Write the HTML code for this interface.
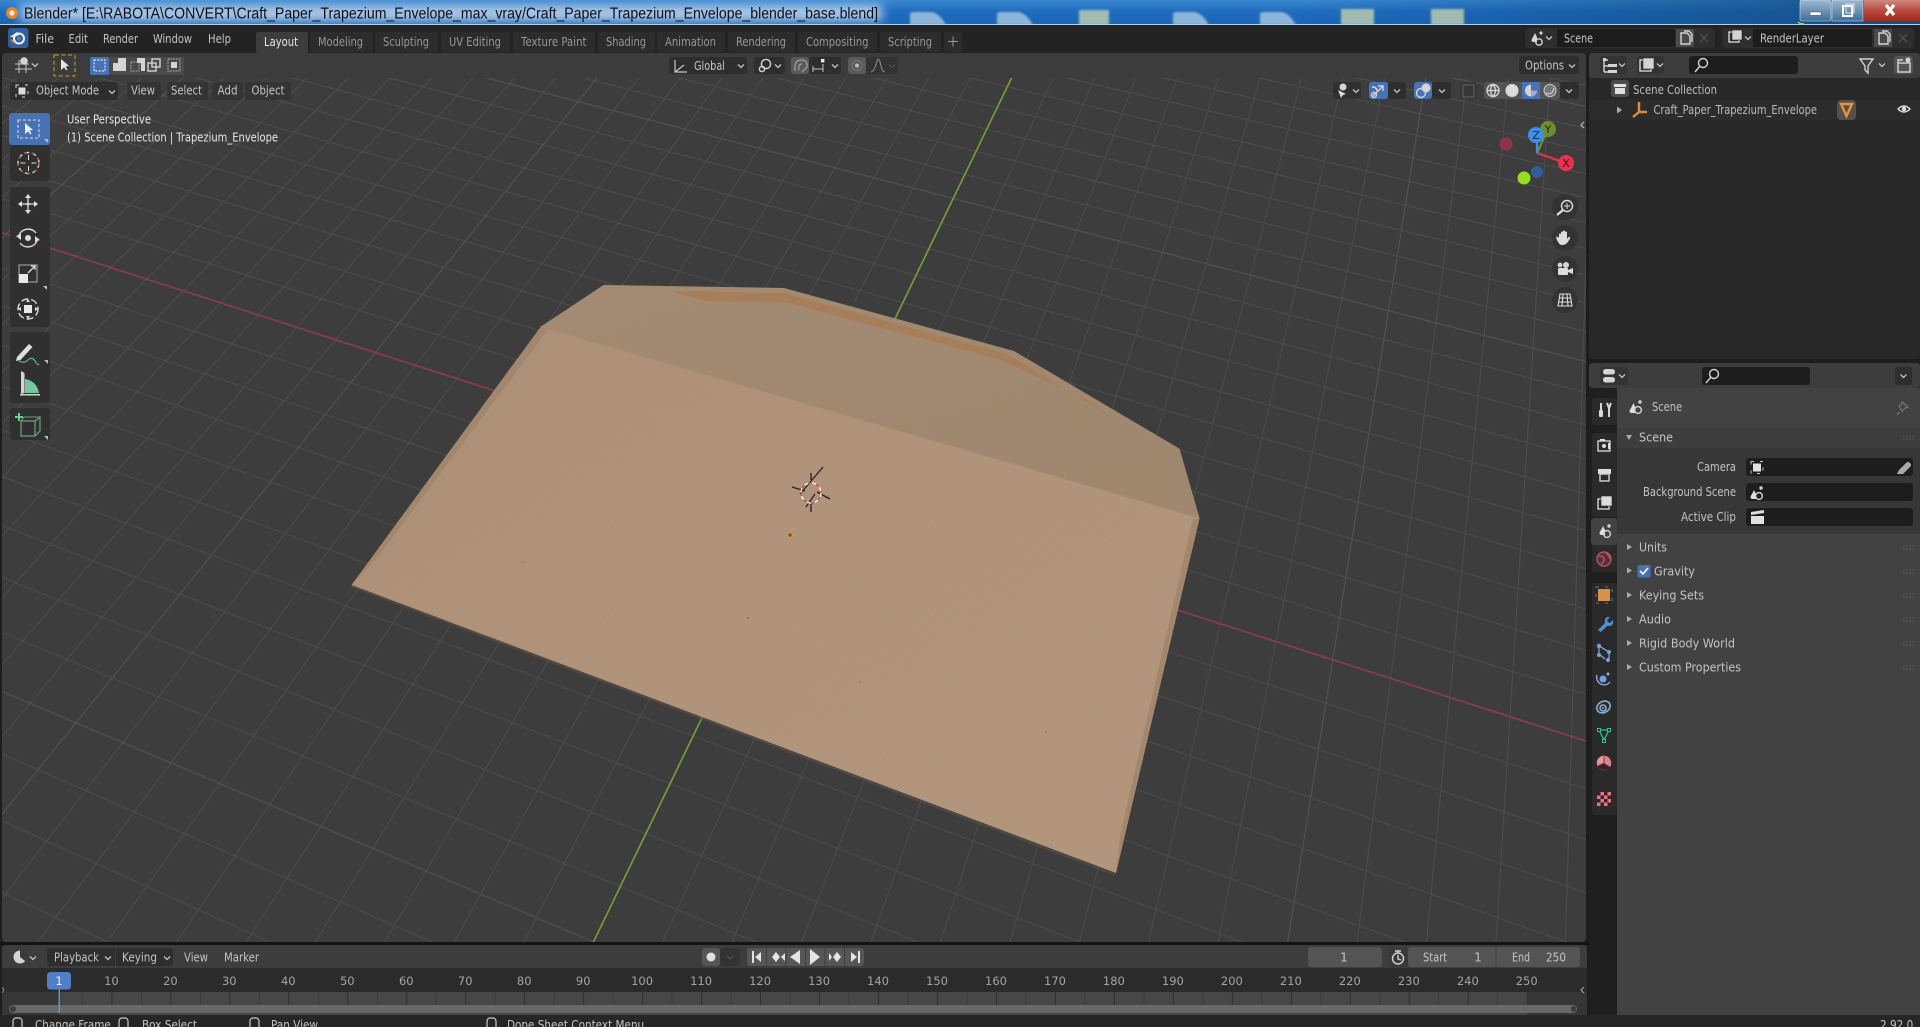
<!DOCTYPE html>
<html lang="en"><head><meta charset="utf-8"><title>Blender</title>
<style>
html,body{margin:0;padding:0;background:#1d1d1d;overflow:hidden;width:1920px;height:1027px}
svg{display:block;position:absolute;left:0;top:0}
text{font-family:"DejaVu Sans","Liberation Sans",sans-serif;font-size:12px;fill:#c4c4c4}
.d{fill:#969696}.b{fill:#e6e6e6}.n{fill:#a4a4a4;font-size:11.5px}.h{fill:#bdbdbd;font-size:12px}
.i{fill:none;stroke:#d4d4d4;stroke-width:1.4}.f{fill:#d4d4d4}
.c{fill:none;stroke:#c4c4c4;stroke-width:1.3}
.st{position:absolute;top:1015px;height:12px;line-height:21px;overflow:hidden;white-space:nowrap;font:12px/21px "DejaVu Sans","Liberation Sans",sans-serif;color:#c4c4c4;transform:scaleX(.87);transform-origin:0 0}
</style></head><body>
<svg xmlns="http://www.w3.org/2000/svg" width="1920" height="1027" viewBox="0 0 1920 1027">
<defs>
<path id="c" class="c" d="M-3-1.5L0 1.5L3-1.5"/>
<linearGradient id="tb" x1="0" y1="0" x2="0" y2="1"><stop offset="0" stop-color="#3a88d0"/><stop offset=".45" stop-color="#1f6cbe"/><stop offset="1" stop-color="#1a66b6"/></linearGradient>
<linearGradient id="tr" x1="0" y1="0" x2="1" y2="0"><stop offset="0" stop-color="#0d4f90" stop-opacity="0"/><stop offset="1" stop-color="#144a7c" stop-opacity=".85"/></linearGradient>
<linearGradient id="wb" x1="0" y1="0" x2="0" y2="1"><stop offset="0" stop-color="#9db9d2"/><stop offset=".5" stop-color="#6f93b4"/><stop offset="1" stop-color="#3d6e99"/></linearGradient>
<linearGradient id="wc" x1="0" y1="0" x2="0" y2="1"><stop offset="0" stop-color="#d08a80"/><stop offset=".5" stop-color="#b84a3e"/><stop offset="1" stop-color="#9c2c20"/></linearGradient>
<linearGradient id="bd" x1="0" y1="0" x2="1" y2="1"><stop offset="0" stop-color="#ae9078"/><stop offset=".6" stop-color="#b3967c"/><stop offset="1" stop-color="#b5987e"/></linearGradient>
<linearGradient id="fl" x1="0" y1="0" x2="1" y2="1"><stop offset="0" stop-color="#a48b74"/><stop offset="1" stop-color="#a0886f"/></linearGradient>
<pattern id="tk" width="58.97" height="30" patternUnits="userSpaceOnUse" patternTransform="translate(111.4 992)"><rect x="0" width="1" height="30" fill="#2f2f2f"/><rect x="29.48" width="1" height="30" fill="#3b3b3b"/></pattern>
<filter id="bl" x="-5%" y="-50%" width="110%" height="200%"><feGaussianBlur stdDeviation="5"/></filter>
<filter id="b2" x="-10%" y="-10%" width="120%" height="120%"><feGaussianBlur stdDeviation="1"/></filter>
<filter id="s1"><feGaussianBlur stdDeviation=".35"/></filter>
<filter id="nz" x="0" y="0" width="100%" height="100%"><feTurbulence type="fractalNoise" baseFrequency=".8" numOctaves="2" seed="4"/><feColorMatrix values="0 0 0 0 .3 0 0 0 0 .22 0 0 0 0 .15 0 0 0 .5 -.17"/><feComposite in2="SourceGraphic" operator="in"/></filter>
</defs>

<!-- title bar -->
<rect width="1920" height="25" fill="url(#tb)"/>
<rect x="1300" width="620" height="25" fill="url(#tr)"/>
<g fill="#bcd6e6" opacity=".7" filter="url(#b2)">
<path d="M910 25V14q0-2 4-2h18q8 2 14 13z"/><path d="M997 25V14q0-2 4-2h18q8 2 14 13z"/>
<path d="M1173 25V14q0-2 4-2h18q8 2 14 13z"/><path d="M1260 25V14q0-2 4-2h18q8 2 14 13z"/>
</g>
<g fill="#cfd8b0" opacity=".75" filter="url(#b2)"><rect x="1079" y="10" width="30" height="15"/><rect x="1341" y="9" width="33" height="16"/><rect x="1431" y="9" width="33" height="16"/></g>
<rect x="20" y="5" width="862" height="16" fill="#e8f1fa" opacity=".72" filter="url(#bl)"/>
<rect y="24" width="1920" height="1" fill="#b3d0ea"/>
<circle cx="12" cy="13" r="6" fill="#e8842a"/><circle cx="12" cy="13" r="2.6" fill="#f3efe8"/>
<text x="24" y="18.5" textLength="854" lengthAdjust="spacingAndGlyphs" style="font-family:'Liberation Sans',sans-serif;font-size:15.5px;fill:#0e0e14">Blender* [E:\RABOTA\CONVERT\Craft_Paper_Trapezium_Envelope_max_vray/Craft_Paper_Trapezium_Envelope_blender_base.blend]</text>
<rect x="1800" y="0" width="31" height="21" rx="2" fill="url(#wb)" stroke="#cfe0ee" stroke-width=".6"/>
<rect x="1832" y="0" width="31" height="21" fill="url(#wb)" stroke="#cfe0ee" stroke-width=".6"/>
<rect x="1864" y="0" width="56" height="21" fill="url(#wc)"/>
<rect x="1810" y="12" width="11" height="3.4" fill="#fff" stroke="#334" stroke-width=".4"/>
<rect x="1843" y="6" width="9" height="10" fill="none" stroke="#fff" stroke-width="2"/><rect x="1846" y="4" width="8" height="9" fill="none" stroke="#dfe8f0" stroke-width="1"/>
<path d="M1886 5l8 10M1894 5l-8 10" stroke="#fff" stroke-width="3.2" fill="none"/>
<path d="M1798 22q2 2 6 2" stroke="#7fe08a" stroke-width="1.4" fill="none"/>

<!-- top bar -->
<rect y="25" width="1920" height="28" fill="#232323"/>
<rect x="8" y="28" width="20.5" height="20" rx="3" fill="#2f5f9f"/>
<circle cx="19" cy="38.5" r="5" fill="none" stroke="#f1f1f1" stroke-width="2"/><circle cx="19" cy="38.5" r="2" fill="#4a7fc0"/><path d="M10 37l7-5 2 3-5 2z" fill="#f1f1f1"/><path d="M15 43l-4-3" stroke="#e8842a" stroke-width="1.6"/>
<g>
<text x="35.5" y="43" textLength="18.5" lengthAdjust="spacingAndGlyphs">File</text>
<text x="68.5" y="43" textLength="19.5" lengthAdjust="spacingAndGlyphs">Edit</text>
<text x="103" y="43" textLength="35" lengthAdjust="spacingAndGlyphs">Render</text>
<text x="153" y="43" textLength="39" lengthAdjust="spacingAndGlyphs">Window</text>
<text x="208" y="43" textLength="23" lengthAdjust="spacingAndGlyphs">Help</text>
</g>
<g fill="#2c2c2c">
<rect x="310" y="32" width="63" height="20" rx="2"/><rect x="375" y="32" width="63" height="20" rx="2"/><rect x="441" y="32" width="69" height="20" rx="2"/><rect x="513" y="32" width="82" height="20" rx="2"/><rect x="598" y="32" width="57" height="20" rx="2"/><rect x="657" y="32" width="68" height="20" rx="2"/><rect x="728" y="32" width="67" height="20" rx="2"/><rect x="798" y="32" width="79" height="20" rx="2"/><rect x="880" y="32" width="61" height="20" rx="2"/><rect x="944" y="32" width="18" height="20" rx="2"/>
</g>
<rect x="256" y="32" width="52" height="21" rx="2" fill="#3d3d3d"/>
<g>
<text class="b" x="264" y="46" textLength="34" lengthAdjust="spacingAndGlyphs">Layout</text>
<text class="d" x="318" y="46" textLength="45" lengthAdjust="spacingAndGlyphs">Modeling</text>
<text class="d" x="383" y="46" textLength="46" lengthAdjust="spacingAndGlyphs">Sculpting</text>
<text class="d" x="449" y="46" textLength="52" lengthAdjust="spacingAndGlyphs">UV Editing</text>
<text class="d" x="521" y="46" textLength="65.5" lengthAdjust="spacingAndGlyphs">Texture Paint</text>
<text class="d" x="606" y="46" textLength="40" lengthAdjust="spacingAndGlyphs">Shading</text>
<text class="d" x="665" y="46" textLength="51" lengthAdjust="spacingAndGlyphs">Animation</text>
<text class="d" x="736" y="46" textLength="50" lengthAdjust="spacingAndGlyphs">Rendering</text>
<text class="d" x="806" y="46" textLength="62.5" lengthAdjust="spacingAndGlyphs">Compositing</text>
<text class="d" x="888" y="46" textLength="44" lengthAdjust="spacingAndGlyphs">Scripting</text>
</g>
<path d="M953 36.500v10M948 41.500h10" stroke="#999" stroke-width="1"/>
<!-- scene / renderlayer -->
<rect x="1525" y="28" width="190" height="20" rx="3" fill="#2e2e2e"/>
<rect x="1557" y="29" width="118" height="18" fill="#1c1c1c"/>
<rect x="1676" y="29" width="18" height="18" fill="#4a4a4a"/>
<path d="M1533 42q-3-1 0-5l2-4 2 4v5z" fill="#d4d4d4"/><circle cx="1539" cy="42" r="3.2" class="i"/><circle cx="1541" cy="33" r="1.6" class="f"/>
<use href="#c" x="1549" y="38"/>
<text x="1564" y="42.500" textLength="29" lengthAdjust="spacingAndGlyphs">Scene</text>
<path d="M1681 33h6l3 3v8h-9zM1684 31h5l3 3v8" class="i" stroke-width="1.1"/>
<path d="M1700 34l8 8M1708 34l-8 8" stroke="#555" stroke-width="1.2"/>
<rect x="1722" y="28" width="192" height="20" rx="3" fill="#2e2e2e"/>
<rect x="1753" y="29" width="119" height="18" fill="#1c1c1c"/>
<rect x="1874" y="29" width="18" height="18" fill="#4a4a4a"/>
<rect x="1729" y="32" width="10" height="10" class="i" fill="none"/><rect x="1732" y="30" width="10" height="10" fill="#d4d4d4" stroke="#222" stroke-width=".6"/>
<use href="#c" x="1748" y="38"/>
<text x="1760" y="42.500" textLength="64" lengthAdjust="spacingAndGlyphs">RenderLayer</text>
<path d="M1879 33h6l3 3v8h-9zM1882 31h5l3 3v8" class="i" stroke-width="1.1"/>
<path d="M1899 34l8 8M1907 34l-8 8" stroke="#555" stroke-width="1.2"/>

<!-- viewport -->
<rect x="2" y="53" width="1584" height="889" rx="4" fill="#3d3d3d"/>
<clipPath id="vp"><rect x="2" y="78" width="1584" height="864"/></clipPath>
<g clip-path="url(#vp)" filter="url(#s1)">
<path id="g1" fill="none" stroke="#4d4d4d" stroke-width="1"/>
<path id="g2" fill="none" stroke="#555" stroke-width="1"/>
<path d="M0 232L1600 745.600" stroke="#8f3b51" stroke-width="1.6"/>
<path d="M1012 77L592 945" stroke="#77a03a" stroke-width="1.6"/>
</g>
<rect x="2" y="53" width="1584" height="25" rx="4" fill="#3c3c3c"/>

<!-- envelope -->
<polyline points="351,586 1115,874.500" fill="none" stroke="#5a4e43" stroke-width="2.200" opacity=".7"/>
<polygon points="541,326.500 603.600,285 784,288 1014,351 1179.600,448.700 1199.500,518" fill="url(#fl)"/>
<polygon points="670,291 784,293 1007,354 1107,414 1092,402 998,359 788,303 705,301" fill="#a87e58"/>
<polygon points="541,326.500 1199.500,518 1116,873 351.600,585" fill="url(#bd)"/>
<polygon points="541,326.500 351.600,585 378,557 548.500,329" fill="#a4876d"/>
<polygon points="1199.500,518 1116,873 1120,835.500 1192.700,520" fill="#a5876c"/>
<polygon points="1192.700,520 1199.500,518 1191,555" fill="#a5876c"/>
<polygon points="541,326.500 603.600,285 784,288 1014,351 1179.600,448.700 1199.500,518 1116,873 351.600,585" fill="#000" filter="url(#nz)"/>
<path d="M541 326.500L1199.500 518" stroke="#a88a6f" stroke-width="1"/>
<g fill="#8a6f58"><circle cx="748" cy="618" r="1"/><circle cx="523" cy="562" r=".8"/><circle cx="860" cy="682" r=".8"/><circle cx="1046" cy="732" r=".8"/></g>
<g fill="none" stroke-width="1.300">
<path d="M800 494L823 467M811 480L811 473M806 507L815 494M792 487L805 491M817 492L830 499M811 504V512" stroke="#2a211b"/>
<circle cx="811" cy="493" r="10" stroke="#fff" stroke-dasharray="4 4"/>
<circle cx="811" cy="493" r="10" stroke="#d05050" stroke-dasharray="4 4" stroke-dashoffset="4"/>
</g>
<circle cx="790" cy="535" r="2.400" fill="#7a5a30" stroke="#f0a020" stroke-width="1"/>

<!-- viewport header row 1 -->
<g>
<path d="M15 69h17M15 64h14M19 60v13M26 60v13" stroke="#c4c4c4" stroke-width="1" fill="none"/><circle cx="24" cy="61" r="3.800" class="f"/>
<use href="#c" x="35" y="65"/>
<rect x="54" y="55" width="21" height="21" rx="1" fill="none" stroke="#b08c36" stroke-width="1.300" stroke-dasharray="4 2.500"/>
<path d="M61 59v11l3-2.500 2.500 3 1-1-2-3 3.500-.5z" fill="#e6e6e6"/>
<rect x="90" y="57" width="19" height="18" rx="2" fill="#4772b3"/>
<rect x="109" y="57" width="75" height="18" fill="#4a4a4a"/>
<rect x="94" y="60" width="11" height="11" fill="none" stroke="#d8e4f4" stroke-width="1.200" stroke-dasharray="2 1.300"/>
<path d="M113 63h5v-5h8v13h-13z" fill="#d4d4d4"/>
<path d="M137 58h8v13h-4v-8h-4z" fill="#d4d4d4"/><rect x="131" y="62" width="8" height="9" fill="none" stroke="#bbb" stroke-dasharray="1.500 1.200"/>
<rect x="148" y="63" width="8" height="8" fill="none" stroke="#d4d4d4" stroke-width="1.400"/><rect x="152" y="59" width="8" height="8" fill="none" stroke="#d4d4d4" stroke-width="1.400"/>
<rect x="168" y="59" width="12" height="12" fill="none" stroke="#bbb" stroke-dasharray="1.500 1.200"/><rect x="171" y="62" width="6" height="6" fill="#d4d4d4"/>
</g>
<g>
<rect x="669" y="57" width="78" height="17" rx="3" fill="#2e2e2e"/>
<path d="M675 60v12h12M675 72l9-7" stroke="#c8c8c8" stroke-width="1.200" fill="none"/>
<text x="694" y="70" textLength="31" lengthAdjust="spacingAndGlyphs">Global</text>
<use href="#c" x="741" y="66"/>
<rect x="754" y="57" width="31" height="17" rx="3" fill="#2e2e2e"/>
<circle cx="766" cy="64" r="4.600" class="i" stroke-width="1.100"/><circle cx="762" cy="69" r="2.600" class="i" stroke-width="1.100"/><use href="#c" x="778" y="66"/>
<rect x="791" y="57" width="18" height="17" rx="3" fill="#5a5a5a"/>
<path d="M795 71q-1-11 6-11t6 7l-5 5M799 70q-1-6 3-6" stroke="#a0a0a0" stroke-width="1.300" fill="none"/>
<rect x="809" y="57" width="32" height="17" rx="3" fill="#2e2e2e"/>
<path d="M813 66v6M823 64v8M813 69h10" stroke="#c0c0c0" stroke-width="1"/><rect x="821" y="59" width="3.400" height="3.400" fill="#eee"/><use href="#c" x="835" y="66"/>
<rect x="848" y="57" width="18" height="17" rx="3" fill="#5a5a5a"/><circle cx="857" cy="65.500" r="2" fill="#bbb"/><circle cx="857" cy="65.500" r="5" fill="none" stroke="#777"/>
<rect x="866" y="57" width="32" height="17" rx="3" fill="#333"/>
<path d="M871 72q3-1 4.500-6t2.500-7q2 1 3 7t4 6" stroke="#888" stroke-width="1.100" fill="none"/>
<path d="M889 64.500l3 3 3-3" stroke="#555" fill="none"/>
<rect x="1519" y="56" width="60" height="18" rx="3" fill="#2e2e2e"/>
<text x="1525" y="69.500" textLength="39" lengthAdjust="spacingAndGlyphs">Options</text><use href="#c" x="1572" y="66"/>
</g>

<!-- viewport row 2 -->
<g>
<rect x="10" y="82" width="108" height="18" rx="3" fill="#2c2c2c" opacity=".9"/>
<rect x="127" y="82" width="34" height="18" rx="3" fill="#333" opacity=".85"/>
<rect x="167" y="82" width="41" height="18" rx="3" fill="#333" opacity=".85"/>
<rect x="212" y="82" width="31" height="18" rx="3" fill="#333" opacity=".85"/>
<rect x="245" y="82" width="46" height="18" rx="3" fill="#333" opacity=".85"/>
<rect x="16" y="85" width="12" height="12" fill="none" stroke="#bbb" stroke-dasharray="3 6" stroke-width="1.200"/><rect x="18.500" y="87.500" width="7" height="7" fill="#ddd"/>
<text x="36" y="94.500" textLength="63" lengthAdjust="spacingAndGlyphs">Object Mode</text><use href="#c" x="112" y="92"/>
<text x="131" y="94.500" textLength="24" lengthAdjust="spacingAndGlyphs">View</text>
<text x="171" y="94.500" textLength="31" lengthAdjust="spacingAndGlyphs">Select</text>
<text x="217.500" y="94.500" textLength="20" lengthAdjust="spacingAndGlyphs">Add</text>
<text x="251.500" y="94.500" textLength="33" lengthAdjust="spacingAndGlyphs">Object</text>
<text class="b" x="67" y="123.500" textLength="84" lengthAdjust="spacingAndGlyphs">User Perspective</text>
<text class="b" x="67" y="141.500" textLength="211" lengthAdjust="spacingAndGlyphs">(1) Scene Collection | Trapezium_Envelope</text>
</g>
<!-- shading row -->
<g>
<rect x="1333" y="82" width="28" height="17" rx="3" fill="#2e2e2e" opacity=".85"/>
<rect x="1369" y="82" width="19" height="17" rx="3" fill="#4772b3"/><rect x="1388" y="82" width="18" height="17" rx="3" fill="#2e2e2e"/>
<rect x="1414" y="82" width="18" height="17" rx="3" fill="#4772b3"/><rect x="1432" y="82" width="19" height="17" rx="3" fill="#2e2e2e"/>
<rect x="1460" y="82" width="17" height="17" rx="3" fill="#363636"/>
<rect x="1484" y="82" width="76" height="17" rx="3" fill="#545454"/><rect x="1522" y="82" width="18" height="17" fill="#4772b3"/>
<rect x="1560" y="82" width="19" height="17" rx="3" fill="#2e2e2e"/>
<circle cx="1343" cy="87" r="3.500" class="f"/><path d="M1338 90l3 8 2-3 3-1z" fill="#ddd"/><use href="#c" x="1356" y="91"/>
<path d="M1373 96l10-10M1378 86h5v5" class="i" stroke-width="1.100"/><circle cx="1374" cy="95" r="2.500" class="i" stroke-width="1.100"/><path d="M1372 87q5 0 5 4" class="i" stroke-width="1"/><use href="#c" x="1397" y="91"/>
<circle cx="1426" cy="88" r="4.500" class="f"/><circle cx="1421" cy="93" r="4.500" class="i" stroke-width="1.100"/><use href="#c" x="1442" y="91"/>
<rect x="1463" y="85" width="11" height="12" fill="none" stroke="#666"/>
<circle cx="1493" cy="90.500" r="6" class="i" stroke-width="1"/><path d="M1487 90.500h12M1493 84.500q-5 6 0 12M1493 84.500q5 6 0 12" class="i" stroke-width=".8"/>
<circle cx="1512" cy="90.500" r="6.500" fill="#dcdcdc"/>
<circle cx="1531" cy="90.500" r="6" class="f"/><path d="M1531 84.500a6 6 0 0 1 6 6h-6z" fill="#4772b3"/><path d="M1531 90.500h6a6 6 0 0 1-6 6z" fill="#aac"/>
<circle cx="1550" cy="90.500" r="6" fill="#777" stroke="#ccc"/><path d="M1546 93q6 3 8-5" stroke="#ddd" fill="none"/>
<use href="#c" x="1569" y="91"/>
</g>
<!-- gizmo -->
<g>
<circle cx="1506" cy="144" r="6.500" fill="#8e3347"/>
<circle cx="1537" cy="172" r="6" fill="#2f5f9a"/>
<circle cx="1524" cy="178" r="6.500" fill="#92e01c"/>
<path d="M1537 153L1566 163" stroke="#e8324f" stroke-width="2.200"/>
<path d="M1537 153L1548 129" stroke="#6e9030" stroke-width="2.200"/>
<path d="M1537 153V135" stroke="#3e90e6" stroke-width="2.200"/>
<circle cx="1548" cy="129" r="8" fill="#6e8f2e"/><text x="1548" y="133" text-anchor="middle" style="font-size:11px;fill:#1c2a08">Y</text>
<circle cx="1536" cy="135" r="8" fill="#3e90e6"/><text x="1536" y="139" text-anchor="middle" style="font-size:11px;fill:#0d2a50">Z</text>
<circle cx="1566" cy="163" r="8" fill="#e8324f"/><text x="1566" y="167" text-anchor="middle" style="font-size:11px;fill:#4a0a14">X</text>
</g>
<g fill="#333" opacity=".9"><circle cx="1565" cy="207" r="13"/><circle cx="1565" cy="238" r="13"/><circle cx="1565" cy="269" r="13"/><circle cx="1565" cy="300" r="13"/></g>
<circle cx="1567" cy="206" r="5.500" fill="none" stroke="#ddd" stroke-width="1.400"/><path d="M1563 210l-6 5" stroke="#ddd" stroke-width="2.200"/><path d="M1564 206h6M1567 203v6" stroke="#ddd"/>
<path d="M1559 240v-6q1-1 2 0v-2q1-1 2 0v-1q1-1 2 0v1q1-1 2 0v7q2-3 3-2t-3 6q-2 2-5 2t-5-5l-1-3q1-1 3 1z" fill="#ddd"/>
<rect x="1558" y="268" width="10" height="7" rx="1" fill="#ddd"/><circle cx="1560" cy="265" r="2.400" class="f"/><circle cx="1566" cy="265" r="3" class="f"/><path d="M1568 270l5-2v6l-5-2z" fill="#ddd"/>
<path d="M1560 294h10l2 12h-14zM1563 294l-1 12M1567 294l1 12M1559 298h12M1558 302h14" fill="none" stroke="#ddd" stroke-width="1.100"/>
<path d="M1584 122l-3 3 3 3" stroke="#aaa" fill="none" stroke-width="1.300"/>
<!-- toolbar -->
<g>
<rect x="9" y="113" width="41" height="32" rx="3" fill="#4772b3"/>
<g fill="#2e2e2e" opacity=".85">
<rect x="10" y="145" width="40" height="36" rx="3"/><rect x="10" y="187" width="40" height="140" rx="3"/><rect x="10" y="332" width="40" height="71" rx="3"/><rect x="10" y="408" width="40" height="32" rx="3"/>
</g>
<rect x="18" y="120" width="21" height="18" fill="none" stroke="#c4c8cc" stroke-width="1.300" stroke-dasharray="3 2"/>
<path d="M25 123v11l3-2.500 2.500 3 1-1-2-3 3.500-.5z" fill="#e8eef8"/>
<circle cx="28.500" cy="163" r="10.500" fill="none" stroke="#d8d8d8" stroke-width="1.400" stroke-dasharray="5 2.500"/><circle cx="28.500" cy="163" r="10.500" fill="none" stroke="#c05050" stroke-width="1.400" stroke-dasharray="2.500 5"/>
<path d="M28.500 155v5M28.500 166v5M20.500 163h5M31.500 163h5" stroke="#ddd" stroke-width="1"/>
<path d="M28 194l3 4h-6zM28 214l3-4h-6zM18 204l4-3v6zM38 204l-4-3v6z" fill="#e0e0e0"/><path d="M28 198v4M28 206v4M22 204h4M30 204h4" stroke="#ddd" stroke-width="1.300"/><circle cx="28" cy="204" r="1.800" fill="#ddd"/>
<circle cx="28" cy="238" r="3" fill="#ddd"/><path d="M19 235a10 10 0 0 1 17-2M37 241a10 10 0 0 1-17 2" fill="none" stroke="#ddd" stroke-width="1.400"/><path d="M16 236l5-2 0 6zM40 240l-5 2 0-6z" fill="#ddd"/>
<rect x="19" y="265" width="18" height="17" fill="none" stroke="#999" stroke-width="1.200"/><rect x="19" y="274" width="9" height="9" fill="#e8e8e8"/><path d="M28 273l7-7M31 266h4v4" stroke="#ddd" fill="none" stroke-width="1.300"/>
<circle cx="28" cy="309" r="10" fill="none" stroke="#ddd" stroke-width="1.400" stroke-dasharray="7 3"/><rect x="24" y="305" width="8" height="8" fill="#e8e8e8"/><path d="M28 299l2 3h-4zM28 319l2-3h-4zM18 309l3-2v4zM38 309l-3-2v4z" fill="#ddd"/>
<path d="M17 357l12-13 3.500 3-12 13-4.500 1z" fill="#e0e0e0"/><path d="M19 361q5 3 9-1t7 1 4 3" stroke="#5fb58a" fill="none" stroke-width="1.200"/>
<path d="M25 393v-14q12 2 14 14z" fill="#74c89a"/><path d="M21 394v-23l3.500 2v20M20 394h20v1.500H20z" fill="#d4d4d4"/>
<path d="M19 413v8M15 417h8" stroke="#6fd08e" stroke-width="2"/>
<path d="M21 421h14l5-4v14l-5 5H21zM35 421v15" fill="none" stroke="#6fa088" stroke-width="1.200"/><path d="M24 417l-3 4M24 417h16" stroke="#6fa088"/>
<path d="M48 143v-4h-4zM47 290v-4h-4zM48 364v-4h-4zM48 440v-4h-4z" fill="#bbb"/>
</g>

<!-- timeline -->
<rect x="0" y="942" width="1590" height="3" fill="#141414"/>
<rect x="2" y="945" width="1585" height="24" rx="3" fill="#3d3d3d"/>
<rect x="2" y="968" width="1585" height="24" fill="#2b2b2b"/>
<rect x="2" y="992" width="1585" height="23" fill="#363636"/>
<rect x="59" y="992" width="1468" height="23" fill="#474747"/>
<rect x="59" y="992" width="1468" height="13" fill="url(#tk)"/>
<rect x="9" y="1005" width="1568" height="8" rx="4" fill="#686868"/>
<rect x="10" y="1006" width="6" height="6" rx="3" fill="#3d3d3d"/><rect x="1571" y="1006" width="5" height="6" rx="2.500" fill="#3d3d3d"/>
<circle cx="20" cy="957" r="6.500" class="f"/><path d="M20 950.500v6.500l5 4a6.500 6.500 0 0 0 0-10.500z" fill="#3a3a3a"/>
<use href="#c" x="33" y="958"/>
<rect x="47" y="948" width="126" height="18" rx="3" fill="#2e2e2e"/><rect x="115" y="948" width="1" height="18" fill="#3d3d3d"/>
<text x="54" y="961.500" textLength="45" lengthAdjust="spacingAndGlyphs">Playback</text><use href="#c" x="108" y="958"/>
<text x="122" y="961.500" textLength="35" lengthAdjust="spacingAndGlyphs">Keying</text><use href="#c" x="167" y="958"/>
<text x="184" y="961.500" textLength="24" lengthAdjust="spacingAndGlyphs">View</text>
<text x="224" y="961.500" textLength="35" lengthAdjust="spacingAndGlyphs">Marker</text>
<rect x="702" y="948" width="18" height="18" rx="3" fill="#565656"/><circle cx="711" cy="957" r="4.500" fill="#e0e0e0"/>
<rect x="720" y="948" width="20" height="18" rx="3" fill="#333"/><path d="M727 956l3 3 3-3" stroke="#555" fill="none"/>
<rect x="747" y="948" width="117" height="18" rx="3" fill="#565656"/>
<g stroke="#3d3d3d"><path d="M766.500 948v18M786 948v18M805.500 948v18M825 948v18M844.500 948v18"/></g>
<g fill="#e4e4e4">
<rect x="752" y="951" width="2" height="12"/><path d="M755 957l6-5v10z"/>
<path d="M772 957l4-5 4 5-4 5zM781 957l4-4v8z"/>
<path d="M790 957l10-7v14z"/>
<path d="M810 949l10 8-10 8z"/>
<path d="M829 953l3 4-3 4zM833 957l4-5 4 5-4 5z"/>
<path d="M851 952l6 5-6 5z"/><rect x="858" y="951" width="2" height="12"/>
</g>
<rect x="1308" y="947" width="74" height="20" rx="3" fill="#545454"/>
<text x="1344" y="961.500" text-anchor="middle">1</text>
<rect x="1389" y="947" width="19" height="20" rx="3" fill="#3a3a3a"/>
<circle cx="1398" cy="958.500" r="5.500" class="i"/><path d="M1395 951h6M1398 951v2M1398 955v4l3 1" class="i" stroke-width="1.100"/>
<rect x="1408" y="947" width="172" height="20" rx="3" fill="#545454"/><rect x="1495.500" y="947" width="1" height="20" fill="#444"/>
<text x="1423" y="961.500" textLength="24" lengthAdjust="spacingAndGlyphs">Start</text>
<text x="1478" y="961.500" text-anchor="middle">1</text>
<text x="1512" y="961.500" textLength="18" lengthAdjust="spacingAndGlyphs">End</text>
<text x="1546" y="961.500" textLength="20" lengthAdjust="spacingAndGlyphs">250</text>
<g text-anchor="middle">
<text class="n" x="111.400" y="985">10</text><text class="n" x="170.400" y="985">20</text><text class="n" x="229.300" y="985">30</text><text class="n" x="288.300" y="985">40</text><text class="n" x="347.300" y="985">50</text><text class="n" x="406.300" y="985">60</text><text class="n" x="465.200" y="985">70</text><text class="n" x="524.200" y="985">80</text><text class="n" x="583.200" y="985">90</text><text class="n" x="642.100" y="985">100</text><text class="n" x="701.100" y="985">110</text><text class="n" x="760.100" y="985">120</text><text class="n" x="819.100" y="985">130</text><text class="n" x="878" y="985">140</text><text class="n" x="937" y="985">150</text><text class="n" x="996" y="985">160</text><text class="n" x="1055" y="985">170</text><text class="n" x="1113.900" y="985">180</text><text class="n" x="1172.900" y="985">190</text><text class="n" x="1231.900" y="985">200</text><text class="n" x="1290.800" y="985">210</text><text class="n" x="1349.800" y="985">220</text><text class="n" x="1408.800" y="985">230</text><text class="n" x="1467.800" y="985">240</text><text class="n" x="1526.700" y="985">250</text>
</g>
<rect x="58.500" y="989" width="1.400" height="24" fill="#6f92c8"/>
<rect x="47" y="972" width="24" height="17.500" rx="3.500" fill="#4f7fc4"/>
<text x="59" y="985" text-anchor="middle" style="font-size:11.500px;fill:#e8eef8">1</text>
<path d="M2 987l2 3-2 3" stroke="#888" fill="none"/><path d="M1584 987l-3 3 3 3" stroke="#aaa" fill="none"/>

<!-- status -->
<rect y="1015" width="1920" height="12" fill="#262626"/>
<g fill="none" stroke="#ccc" stroke-width="1.200"><rect x="13" y="1018" width="9" height="14" rx="3"/><rect x="119" y="1018" width="9" height="14" rx="3"/><rect x="250" y="1018" width="9" height="14" rx="3"/><rect x="487" y="1018" width="9" height="14" rx="3"/></g>

<!-- outliner -->
<rect x="1589" y="53" width="331" height="306" rx="3" fill="#282828"/>
<rect x="1589" y="53" width="331" height="25" rx="3" fill="#3d3d3d"/>
<rect x="1589" y="100" width="331" height="20" fill="#2c2c2c"/>
<rect x="1600" y="56" width="27" height="18" rx="3" fill="#333"/><rect x="1637" y="56" width="27" height="18" rx="3" fill="#333"/>
<path d="M1604 60h4M1604 60v12M1604 66h4M1604 72h4" class="i" stroke-width="1"/><rect x="1608" y="64" width="9" height="3" class="f"/><rect x="1608" y="70" width="9" height="3" class="f"/><rect x="1603" y="58" width="3" height="3" class="f"/><use href="#c" x="1622" y="65"/>
<rect x="1640" y="60" width="11" height="11" class="i" fill="none"/><rect x="1643" y="58" width="11" height="11" fill="#d4d4d4" stroke="#333" stroke-width=".6"/><use href="#c" x="1660" y="65"/>
<rect x="1689" y="56" width="109" height="18" rx="3" fill="#1d1d1d"/>
<circle cx="1703" cy="63" r="4.500" class="i"/><path d="M1700 66l-5 6" class="i"/>
<path d="M1860 59h13l-5 7v7l-3-3v-4z" class="i"/><use href="#c" x="1882" y="65"/>
<rect x="1894" y="56" width="19" height="18" rx="3" fill="#545454"/><rect x="1898" y="63" width="12" height="9" class="i" fill="none"/><path d="M1898 63v-3h5" class="i"/><circle cx="1908" cy="60" r="2.500" class="f"/>
<rect x="1611" y="80" width="18" height="17" rx="3" fill="#4c4c4c"/><rect x="1614" y="84" width="12" height="3" fill="#e0e0e0"/><rect x="1615" y="88" width="10" height="6" fill="#e0e0e0"/>
<text x="1633" y="94" textLength="84" lengthAdjust="spacingAndGlyphs" class="h">Scene Collection</text>
<path d="M1617 106.500l5 3.500-5 3.500z" fill="#aaa"/>
<path d="M1639 102v10l-6 5M1639 112h8" stroke="#e08a3c" stroke-width="2.400" fill="none"/>
<text x="1653.500" y="114" textLength="163.500" lengthAdjust="spacingAndGlyphs" class="h">Craft_Paper_Trapezium_Envelope</text>
<rect x="1837" y="100" width="19" height="20" rx="4" fill="#55504a"/><path d="M1841 104h11l-5.500 12z" fill="none" stroke="#e8943c" stroke-width="2.400"/>
<path d="M1898 109q6-6 12 0q-6 6-12 0z" fill="none" stroke="#e0e0e0" stroke-width="1.300"/><circle cx="1904" cy="109" r="2.200" fill="#e0e0e0"/>

<!-- properties -->
<rect x="1589" y="363" width="331" height="652" rx="3" fill="#1f1f1f"/>
<rect x="1589" y="363" width="331" height="25" rx="3" fill="#3d3d3d"/>
<rect x="1617" y="388" width="303" height="627" fill="#424242"/>
<rect x="1600" y="367" width="28" height="18" rx="3" fill="#333"/>
<rect x="1603" y="369" width="12" height="5.500" rx="2.700" class="f"/><rect x="1603" y="377" width="12" height="5.500" rx="2.700" class="f"/><use href="#c" x="1622" y="376"/>
<rect x="1702" y="367" width="108" height="18" rx="3" fill="#1d1d1d"/><circle cx="1714" cy="374" r="4.500" class="i"/><path d="M1711 377l-5 6" class="i"/>
<rect x="1895" y="367" width="17" height="18" rx="3" fill="#2e2e2e"/><use href="#c" x="1903.500" y="376"/>
<!-- tabs -->
<g fill="#2a2a2a">
<rect x="1592" y="398" width="25" height="27" rx="3"/><rect x="1592" y="433" width="25" height="84" rx="3"/><rect x="1592" y="545" width="25" height="27"/><rect x="1592" y="583" width="25" height="232" rx="3"/>
</g>
<rect x="1591" y="518" width="26" height="27" rx="3" fill="#424242"/>
<path d="M1601 403v7M1607 403l2 5 2-5M1609 408v9" stroke="#d8d8d8" stroke-width="2" fill="none"/><rect x="1599" y="410" width="4" height="7" rx="1" fill="#d8d8d8"/>
<rect x="1598" y="441" width="12" height="10" fill="none" stroke="#ddd" stroke-width="1.300"/><circle cx="1604" cy="446" r="2" fill="#ddd"/><rect x="1600" y="439" width="5" height="2" fill="#ddd"/><rect x="1608" y="443" width="2" height="6" fill="#ddd"/>
<rect x="1598" y="469" width="13" height="5" fill="#ddd"/><rect x="1600" y="474" width="9" height="7" class="i" fill="none"/>
<rect x="1598" y="499" width="11" height="10" class="i" fill="none"/><rect x="1601" y="496" width="11" height="10" fill="#ddd" stroke="#222" stroke-width=".6"/>
<path d="M1601 535q-3-1 0-5l2-4 2 4v5z" fill="#ddd"/><circle cx="1607" cy="534" r="3.400" class="i"/><circle cx="1609" cy="526" r="1.700" class="f"/>
<circle cx="1604" cy="559" r="7" fill="#5a3038" stroke="#b05562" stroke-width="1.400"/><path d="M1599 556q5 0 5 3t-3 5M1606 553q3 2 4 6" stroke="#b05562" fill="none" stroke-width="1.400"/>
<rect x="1598" y="589" width="12" height="12" fill="#d89050"/><rect x="1596" y="587" width="16" height="16" fill="none" stroke="#777" stroke-dasharray="3 6"/>
<path d="M1598 630l7-7q-1-4 2-6l3 0-3 3 1 2 2 1 3-3q1 5-3 6l-3 0-6 6z" fill="#4f90d8"/>
<path d="M1599 646l10 6 0 7M1599 646v8M1599 654l6 5" stroke="#8ab0d8" stroke-width="1.200" fill="none"/><circle cx="1599" cy="646" r="2.200" fill="#70a4dc"/><circle cx="1609" cy="652" r="2" fill="#70a4dc"/><circle cx="1599" cy="655" r="2" fill="#70a4dc"/><circle cx="1608" cy="660" r="2" fill="#70a4dc"/>
<circle cx="1603" cy="679" r="3.500" fill="#6fa0e0"/><path d="M1597 675a7.500 7.500 0 0 0 13 7" stroke="#8ab0d8" fill="none" stroke-width="1.300"/><circle cx="1608" cy="674" r="1.500" fill="#8ab0d8"/>
<ellipse cx="1603.500" cy="707" rx="7" ry="5.500" transform="rotate(-30 1603.500 707)" fill="none" stroke="#8ab0d8" stroke-width="1.600"/><circle cx="1603" cy="708" r="3" fill="none" stroke="#8ab0d8" stroke-width="1.600"/><circle cx="1603" cy="708" r="1" fill="#8ab0d8"/>
<path d="M1599 730h10l-5 10z" fill="none" stroke="#2cc090" stroke-width="1.300"/><g fill="#222" stroke="#2cc090"><rect x="1597.500" y="728.500" width="3" height="3"/><rect x="1607.500" y="728.500" width="3" height="3"/><rect x="1602.500" y="739.500" width="3" height="3"/></g>
<circle cx="1604" cy="763" r="7.200" fill="#e0808c"/><path d="M1604 763h-7.200a7.200 7.200 0 0 1 7.200-7.200z" fill="#e8949e"/><path d="M1604 763l-6.500 3q2 4 6.500 4t6-3z" fill="#3a2024"/><path d="M1604 763v-6.500" stroke="#5a2a30" stroke-width=".8"/>
<rect x="1597" y="792" width="14" height="14" fill="#d87a88"/>
<g fill="#3f1c22"><rect x="1597" y="792" width="3.500" height="3.500"/><rect x="1604" y="792" width="3.500" height="3.500"/><rect x="1600.500" y="795.500" width="3.500" height="3.500"/><rect x="1607.500" y="795.500" width="3.500" height="3.500"/><rect x="1597" y="799" width="3.500" height="3.500"/><rect x="1604" y="799" width="3.500" height="3.500"/><rect x="1600.500" y="802.500" width="3.500" height="3.500"/><rect x="1607.500" y="802.500" width="3.500" height="3.500"/></g>
<!-- panel -->
<path d="M1631 413q-3-1 0-5l2.500-5 2 5v5z" fill="#ddd"/><circle cx="1638" cy="410" r="3.400" class="i"/><circle cx="1640" cy="402" r="1.700" class="f"/>
<text x="1652" y="411" textLength="30" lengthAdjust="spacingAndGlyphs">Scene</text>
<path d="M1900 412l-3 3M1902 402l6 5-3 1-3 3-3-5 3-2z" stroke="#777" fill="none" stroke-width="1.200"/>
<rect x="1617" y="428" width="303" height="20" fill="#3d3d3d"/>
<rect x="1617" y="448" width="303" height="86" fill="#373737"/>
<path d="M1626 435h6l-3 5z" fill="#aaa"/>
<text x="1639" y="441.500" textLength="34" lengthAdjust="spacingAndGlyphs">Scene</text>
<g text-anchor="end">
<text x="1736" y="471" textLength="39" lengthAdjust="spacingAndGlyphs">Camera</text>
<text x="1736" y="496" textLength="93" lengthAdjust="spacingAndGlyphs">Background Scene</text>
<text x="1736" y="521" textLength="55" lengthAdjust="spacingAndGlyphs">Active Clip</text>
</g>
<g fill="#1d1d1d"><rect x="1746" y="458" width="167" height="18" rx="3"/><rect x="1746" y="483" width="167" height="18" rx="3"/><rect x="1746" y="508" width="167" height="18" rx="3"/></g>
<rect x="1751" y="461.500" width="12" height="12" fill="none" stroke="#ccc" stroke-dasharray="3 6"/><rect x="1753" y="463.500" width="8" height="8" fill="#e0e0e0"/>
<path d="M1897 474l2-4 7-7q2-2 4 0t0 4l-7 7z" fill="#aaa"/>
<path d="M1752 499q-3-1 0-5l2-4 2 4v5z" fill="#ddd"/><circle cx="1759" cy="496" r="3.400" class="i"/><circle cx="1761" cy="488" r="1.700" class="f"/>
<rect x="1751" y="516" width="13" height="8" fill="#e0e0e0"/><path d="M1751 512l13-2v3l-13 2z" fill="#e0e0e0"/>
<g fill="#aaa"><path d="M1627 544l5 3-5 3zM1627 567.500l5 3-5 3zM1627 592l5 3-5 3zM1627 616l5 3-5 3zM1627 640l5 3-5 3zM1627 664l5 3-5 3z"/></g>
<text x="1639" y="551.500" textLength="28" lengthAdjust="spacingAndGlyphs">Units</text>
<rect x="1637.500" y="565" width="13" height="12.500" rx="2" fill="#4772b3"/><path d="M1640 571l3 3 5-6" stroke="#fff" fill="none" stroke-width="1.600"/>
<text x="1654" y="575.500" textLength="41" lengthAdjust="spacingAndGlyphs">Gravity</text>
<text x="1639" y="599.500" textLength="65" lengthAdjust="spacingAndGlyphs">Keying Sets</text>
<text x="1639" y="623.500" textLength="32" lengthAdjust="spacingAndGlyphs">Audio</text>
<text x="1639" y="647.500" textLength="96" lengthAdjust="spacingAndGlyphs">Rigid Body World</text>
<text x="1639" y="671.500" textLength="102" lengthAdjust="spacingAndGlyphs">Custom Properties</text>
<g stroke="#5e5e5e" stroke-width="1" stroke-dasharray="1.500 1.500">
<path d="M1903 436h11M1903 439h11M1903 546h11M1903 549h11M1903 570h11M1903 573h11M1903 594h11M1903 597h11M1903 618h11M1903 621h11M1903 642h11M1903 645h11M1903 666h11M1903 669h11"/>
</g>
</svg>
<div class="st" style="left:35px">Change Frame</div>
<div class="st" style="left:142px">Box Select</div>
<div class="st" style="left:271px">Pan View</div>
<div class="st" style="left:507px">Dope Sheet Context Menu</div>
<div class="st" style="left:1880px">2.92.0</div>
<script>
(function(){
var O=[811,492],Vr=[-4465,-1200],Vg=[1630,-1200],r=0.009,g=0.021,a="",b="";
function add(V,P,k){var dx=P[0]-V[0],dy=P[1]-V[1],t=8;
 var s="M"+V[0]+" "+V[1]+"L"+(V[0]+dx*t).toFixed(1)+" "+(V[1]+dy*t).toFixed(1);
 if(k%10===0){b+=s}else{a+=s}}
for(var k=-45;k<220;k++){var w=1+g*k;if(w<0.06||k===0)continue;
 var P=[(g*k*Vg[0]+O[0])/w,(g*k*Vg[1]+O[1])/w];add(Vr,P,k)}
for(k=-105;k<260;k++){w=1+r*k;if(w<0.05||k===0)continue;
 P=[(r*k*Vr[0]+O[0])/w,(r*k*Vr[1]+O[1])/w];add(Vg,P,k)}
document.getElementById("g1").setAttribute("d",a);
document.getElementById("g2").setAttribute("d",b);
})();
</script>
</body></html>
